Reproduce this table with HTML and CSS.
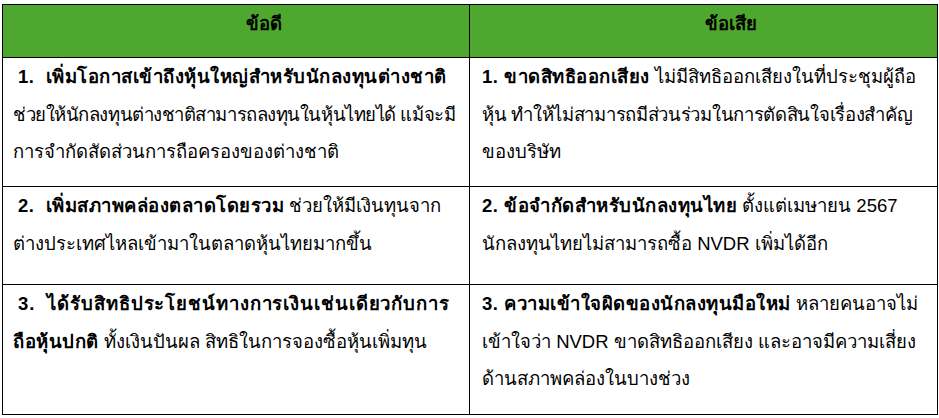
FILE: index.html
```html
<!DOCTYPE html>
<html lang="th">
<head>
<meta charset="utf-8">
<title>ข้อดี ข้อเสีย NVDR</title>
<link rel="stylesheet" href="styles.css">
</head>
<body>
<div class="table">
  <div class="cell head left">ข้อดี</div>
  <div class="cell head">ข้อเสีย</div>

  <div class="cell left"><b>1.&nbsp; เพิ่มโอกาสเข้าถึงหุ้นใหญ่สำหรับนักลงทุนต่างชาติ</b><br><span class="tight">ช่วยให้นักลงทุนต่างชาติสามารถลงทุนในหุ้นไทยได้ แม้จะมี</span><br>การจำกัดสัดส่วนการถือครองของต่างชาติ</div>
  <div class="cell"><b>1. ขาดสิทธิออกเสียง</b> ไม่มีสิทธิออกเสียงในที่ประชุมผู้ถือ<br><span class="snug">หุ้น ทำให้ไม่สามารถมีส่วนร่วมในการตัดสินใจเรื่องสำคัญ</span><br>ของบริษัท</div>

  <div class="cell left"><b>2.&nbsp; เพิ่มสภาพคล่องตลาดโดยรวม</b> ช่วยให้มีเงินทุนจาก<br>ต่างประเทศไหลเข้ามาในตลาดหุ้นไทยมากขึ้น</div>
  <div class="cell"><b>2. ข้อจำกัดสำหรับนักลงทุนไทย</b> ตั้งแต่เมษายน 2567<br>นักลงทุนไทยไม่สามารถซื้อ NVDR เพิ่มได้อีก</div>

  <div class="cell left"><b class="wide">3.&nbsp; ได้รับสิทธิประโยชน์ทางการเงินเช่นเดียวกับการ</b><br><b>ถือหุ้นปกติ</b> ทั้งเงินปันผล สิทธิในการจองซื้อหุ้นเพิ่มทุน</div>
  <div class="cell"><b>3. ความเข้าใจผิดของนักลงทุนมือใหม่</b> หลายคนอาจไม่<br>เข้าใจว่า NVDR ขาดสิทธิออกเสียง และอาจมีความเสี่ยง<br>ด้านสภาพคล่องในบางช่วง</div>
</div>
</body>
</html>
```
FILE: styles.css
```css
html, body {
  margin: 0;
  padding: 0;
  background: #ffffff;
}

body {
  padding: 4px 0 0 2px;
  font-family: "Liberation Sans", "Noto Sans", "DejaVu Sans", sans-serif;
  font-size: 18.5px;
  line-height: 37.5px;
  color: #000000;
}

.table {
  display: grid;
  width: 936px;
  box-sizing: border-box;
  grid-template-columns: 467px 468px;
  grid-template-rows: 53px 129px 98px 130px;
  border-top: 1px solid #000;
  border-left: 1px solid #000;
}

.cell {
  box-sizing: border-box;
  border-right: 1px solid #000;
  border-bottom: 1px solid #000;
  padding: 0 0 0 12px;
  white-space: nowrap;
  overflow: hidden;
}

.cell.left {
  padding-left: 10px;
  text-indent: 5px;
}

.cell b {
  font-weight: bold;
  letter-spacing: 0.5px;
}

.cell b.wide {
  letter-spacing: 0.9px;
}

.tight {
  letter-spacing: -0.45px;
}

.snug {
  letter-spacing: -0.3px;
}

.head {
  background: #4ea72e;
  font-weight: bold;
  text-align: center;
  padding-left: 55px;
  text-indent: 0;
}

.head.left {
  padding-left: 55px;
  text-indent: 0;
}
```
